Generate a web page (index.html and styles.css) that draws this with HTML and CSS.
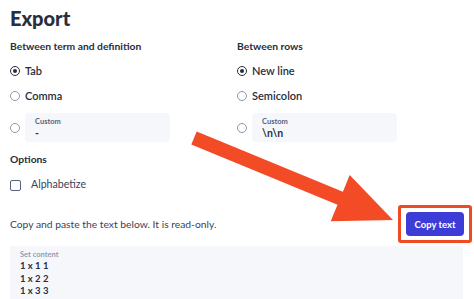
FILE: index.html
```html
<!DOCTYPE html>
<html lang="en">
<head>
<meta charset="utf-8">
<title>Export</title>
<link rel="stylesheet" href="styles.css">
</head>
<body>
<main class="page">
  <h1 class="title">Export</h1>
  <div class="cols">
    <section class="col">
      <h2 class="heading">Between term and definition</h2>
      <div class="choice"><span class="radio is-checked"></span><span>Tab</span></div>
      <div class="choice"><span class="radio"></span><span>Comma</span></div>
      <div class="choice"><span class="radio"></span>
        <div class="field"><span class="field-label">Custom</span><span class="field-value">-</span></div>
      </div>
    </section>
    <section class="col">
      <h2 class="heading">Between rows</h2>
      <div class="choice"><span class="radio is-checked"></span><span>New line</span></div>
      <div class="choice"><span class="radio"></span><span>Semicolon</span></div>
      <div class="choice"><span class="radio"></span>
        <div class="field"><span class="field-label">Custom</span><span class="field-value">\n\n</span></div>
      </div>
    </section>
  </div>
  <h2 class="heading options">Options</h2>
  <div class="check"><span class="checkbox"></span><span>Alphabetize</span></div>
  <div class="copy-row">
    <p class="hint">Copy and paste the text below. It is read-only.</p>
    <span class="highlight"><button class="btn">Copy text</button></span>
  </div>
  <div class="output">
    <span class="output-label">Set content</span>
    <div class="output-line">1 x 1 1</div>
    <div class="output-line">1 x 2 2</div>
    <div class="output-line">1 x 3 3</div>
  </div>
</main>
<svg class="arrow" width="474" height="299" viewBox="0 0 474 299" aria-hidden="true">
  <polygon points="196.7,131.5 342.9,191.7 349.7,175.1 393,220 330.7,221.3 337.5,204.7 191.3,144.5" fill="#f24b26"/>
</svg>
</body>
</html>
```

FILE: styles.css
```css
* { box-sizing: border-box; }
html, body { margin: 0; padding: 0; background: #fff; }
body {
  font-family: Lato, "Noto Sans", sans-serif;
  color: #2e3856;
  width: 474px;
  height: 299px;
  overflow: hidden;
  position: relative;
}
.page { padding: 6px 10px 0 10px; }
.title {
  margin: 0 0 9px 0;
  font-size: 20px;
  line-height: 24px;
  font-weight: 900;
  color: #282e3e;
}
.heading {
  margin: 0;
  font-size: 10.3px;
  line-height: 14px;
  font-weight: 700;
  color: #282e3e;
}
.cols {
  display: grid;
  grid-template-columns: 227px 1fr;
  margin-bottom: 10px;
}
.col { display: flex; flex-direction: column; }
.col .heading { margin-bottom: 10px; }
.choice {
  display: flex;
  align-items: center;
  gap: 5px;
  font-size: 11px;
  line-height: 16px;
  font-weight: 600;
  color: #282e3e;
  margin-bottom: 9px;
}
.choice:last-child { margin-bottom: 0; }
.radio {
  width: 10px;
  height: 10px;
  border-radius: 50%;
  border: 1.2px solid #8f97ad;
  flex: none;
  position: relative;
}
.radio.is-checked { border: 1.5px solid #282e3e; }
.radio.is-checked::after {
  content: "";
  position: absolute;
  left: 1.5px; top: 1.5px;
  width: 4px; height: 4px;
  border-radius: 50%;
  background: #282e3e;
}
.field {
  width: 145px;
  height: 29px;
  background: #f6f7fb;
  border-radius: 4px;
  padding: 4px 10px 0 10px;
  display: flex;
  flex-direction: column;
}
.field-label {
  font-size: 7.5px;
  line-height: 10px;
  font-weight: 700;
  color: #586380;
}
.field-value {
  font-size: 10.5px;
  line-height: 13px;
  font-weight: 700;
  color: #282e3e;
}
.options { margin-bottom: 10px; }
.check {
  display: flex;
  align-items: center;
  gap: 10px;
  font-size: 10.6px;
  line-height: 16px;
  color: #3c4257;
}
.checkbox {
  width: 11px;
  height: 11px;
  border: 1.5px solid #586380;
  border-radius: 2px;
  flex: none;
  position: relative;
  top: 1px;
}
.copy-row {
  display: flex;
  align-items: center;
  justify-content: space-between;
  margin-top: 13px;
  height: 38px;
}
.hint {
  margin: 0;
  font-size: 10.3px;
  line-height: 16px;
  color: #3c4257;
}
.highlight {
  display: inline-block;
  padding: 4px 5px;
  border: 3px solid #f04a23;
  border-radius: 3px;
  margin-right: -8px;
}
.btn {
  display: block;
  width: 58px;
  height: 24px;
  border: 0;
  border-radius: 4px;
  background: #3c3cd6;
  color: #fff;
  font-family: Lato, "Noto Sans", sans-serif;
  font-size: 9.5px;
  font-weight: 700;
  padding: 0;
}
.output {
  margin-top: 3px;
  background: #f6f7fb;
  padding: 4px 10px 0 10px;
  height: 60px;
  width: 453px;
}
.output-label {
  display: block;
  font-size: 7.5px;
  line-height: 10px;
  font-weight: 700;
  color: #939bb4;
}
.output-line {
  font-size: 9.5px;
  line-height: 12.5px;
  font-weight: 700;
  color: #282e3e;
}
.arrow {
  position: absolute;
  left: 0;
  top: 0;
  pointer-events: none;
}
```
